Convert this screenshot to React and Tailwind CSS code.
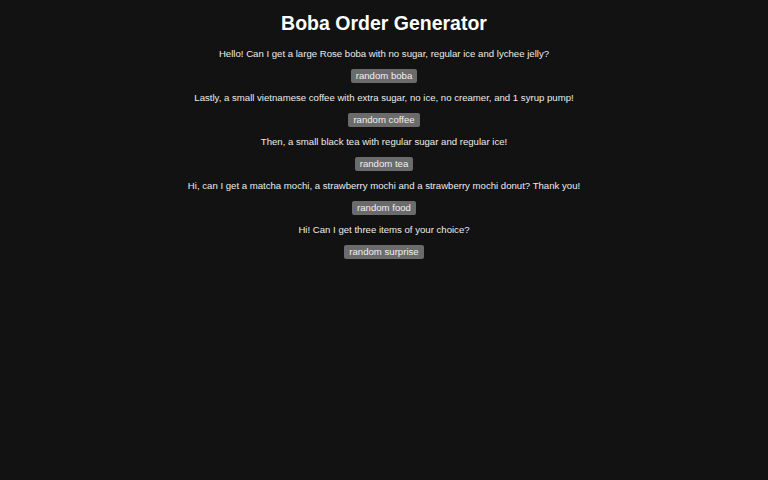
const orders = [
  { text: 'Hello! Can I get a large Rose boba with no sugar, regular ice and lychee jelly?', label: 'random boba' },
  { text: 'Lastly, a small vietnamese coffee with extra sugar, no ice, no creamer, and 1 syrup pump!', label: 'random coffee' },
  { text: 'Then, a small black tea with regular sugar and regular ice!', label: 'random tea' },
  { text: 'Hi, can I get a matcha mochi, a strawberry mochi and a strawberry mochi donut? Thank you!', label: 'random food' },
  { text: 'Hi! Can I get three items of your choice?', label: 'random surprise' },
];

export default function App() {
  return (
    <div className="min-h-screen w-full bg-[#121212] text-white font-['Liberation_Sans',Arial,sans-serif] flex flex-col items-center pt-[12px]">
      <h1 className="text-[19.5px] font-bold leading-[22px] mb-[14px]">Boba Order Generator</h1>
      {orders.map((order) => (
        <div key={order.label} className="flex flex-col items-center">
          <p className="text-[9.6px] leading-[12px] text-[#ececec]">{order.text}</p>
          <button className="mt-[9px] mb-[9px] bg-[#6b6b6b] text-[#f0f0f0] text-[9.6px] leading-[12px] px-[5px] py-[1px] rounded-[2px]">
            {order.label}
          </button>
        </div>
      ))}
    </div>
  );
}
